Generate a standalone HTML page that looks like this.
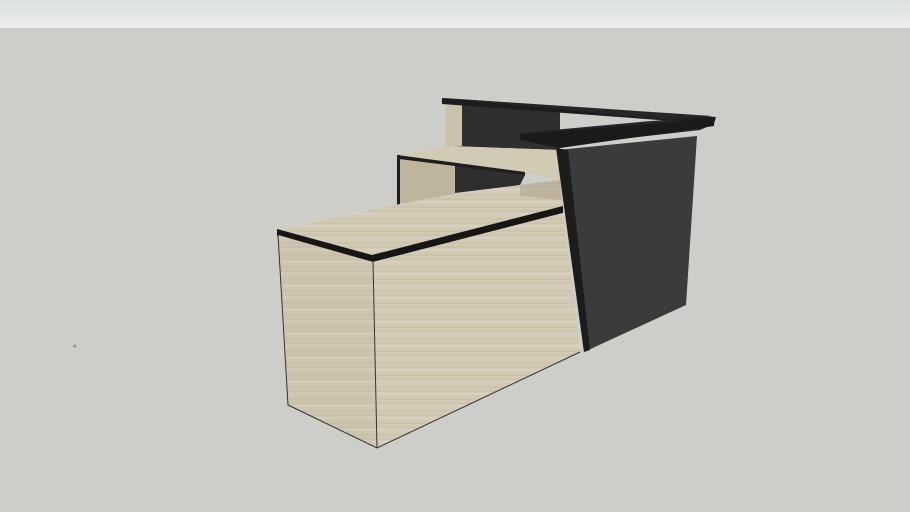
<!DOCTYPE html>
<html><head><meta charset="utf-8"><style>
html,body{margin:0;padding:0;width:910px;height:512px;overflow:hidden;background:#cdcdc9}
.bar{position:absolute;left:0;top:0;width:910px;height:28px;background:linear-gradient(#dce0e0,#eceeee)}
.sep{position:absolute;left:0;top:28px;width:910px;height:1px;background:#c4c6c4}
svg{position:absolute;left:0;top:0}
</style></head><body>
<div class="bar"></div><div class="sep"></div>
<svg width="910" height="512" viewBox="0 0 910 512">
<defs>
<pattern id="grain" width="200" height="12" patternUnits="userSpaceOnUse">
<rect width="200" height="12" fill="#d3cab5"/>
<path d="M0 3 H200 M0 7 H200" stroke="#c0b497" stroke-width="1" opacity=".6"/>
<path d="M0 10 H200" stroke="#e3ddcf" stroke-width="1" opacity=".7"/>
</pattern>
</defs>
<polygon points="446,103 560,110 560,150 446,146" fill="#2f2f2f"/>
<polygon points="446,103 462,104 462,146 446,146" fill="#cbc1aa"/>
<polygon points="442,98 716,117 714,124 442,104" fill="#1d1d1d"/>
<polygon points="444,98 712,116 640,122 520,133 520,138 560,146 700,130 714,124" fill="#262626"/>
<polygon points="520,134 714,119 714,126 560,148 520,140" fill="#1a1a1a"/>
<polygon points="397,155 452,146 560,150 560,180 525,172" fill="#d3cab5"/>
<polygon points="397,155 525,172 525,176 397,159" fill="#1e1e1e"/>
<polygon points="399,159 455,166 455,194 399,204" fill="#bfb49c"/>
<polygon points="455,166 525,175 520,185 455,193" fill="#2e2e2e"/>
<polygon points="397,155 400,155 400,205 397,205" fill="#1e1e1e"/>
<polygon points="558,150 697,136 686,305 584,352" fill="#3b3b3b"/>
<polygon points="556,148 568,150 590,350 584,352" fill="#1c1c1c"/>
<polygon points="278,230 400,204 520,185 560,180 563,208 372,258" fill="url(#grain)"/>
<polygon points="520,185 560,180 562,200 520,196" fill="#b3aa95" opacity=".7"/>
<polygon points="277,229 372,255 563,206 563,213 373,262 277,236" fill="#161616"/>
<polygon points="278,235 373,262 377,448 288,405" fill="url(#grain)"/>
<polygon points="278,235 373,262 377,448 288,405" fill="#b0a688" opacity=".12"/>
<polygon points="373,262 563,213 580,352 377,448" fill="url(#grain)"/>
<path d="M373 262 L377 448 M278 235 L288 405 L377 448 L580 352" stroke="#333" stroke-width="1" fill="none"/>
<text x="73" y="350" font-family="Liberation Sans, sans-serif" font-size="7" fill="#333">^</text>
</svg>
</body></html>
